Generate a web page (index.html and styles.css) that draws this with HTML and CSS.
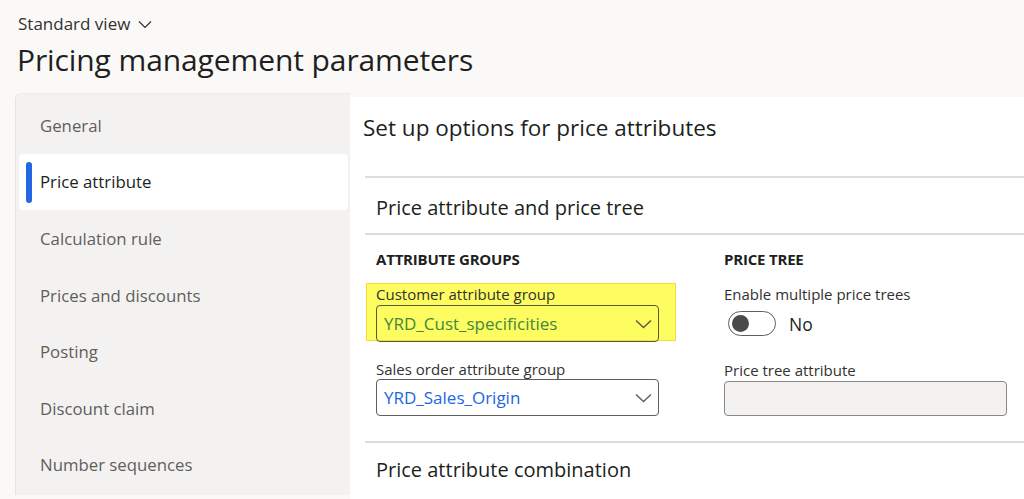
FILE: index.html
```html
<!DOCTYPE html>
<html lang="en">
<head>
  <meta charset="UTF-8">
  <title>Pricing management parameters</title>
  <link rel="stylesheet" href="styles.css">
</head>
<body>

  <header class="page-head">
    <div class="view-picker">Standard view
      <svg class="chev" width="14" height="9" viewBox="0 0 14 9"><path d="M1 1.5 L7 7.5 L13 1.5" fill="none" stroke="#323130" stroke-width="1.2"/></svg>
    </div>
    <h1>Pricing management parameters</h1>
  </header>

  <div class="workspace">
    <nav class="side-nav">
      <a class="nav-item">General</a>
      <a class="nav-item active">Price attribute</a>
      <a class="nav-item">Calculation rule</a>
      <a class="nav-item">Prices and discounts</a>
      <a class="nav-item">Posting</a>
      <a class="nav-item">Discount claim</a>
      <a class="nav-item">Number sequences</a>
    </nav>

    <main class="content">
      <h2 class="content-title">Set up options for price attributes</h2>

      <section class="fasttab">
        <h3 class="fasttab-title">Price attribute and price tree</h3>
        <div class="fasttab-body">
          <div class="group">
            <div class="group-title">ATTRIBUTE GROUPS</div>
            <div class="field highlight">
              <label>Customer attribute group</label>
              <div class="select">
                <span class="value">YRD_Cust_specificities</span>
                <svg width="17" height="10" viewBox="0 0 17 10"><path d="M1 1.5 L8.5 8.5 L16 1.5" fill="none" stroke="#5c5a3a" stroke-width="1.4"/></svg>
              </div>
            </div>
            <div class="field second">
              <label>Sales order attribute group</label>
              <div class="select">
                <span class="value">YRD_Sales_Origin</span>
                <svg width="17" height="10" viewBox="0 0 17 10"><path d="M1 1.5 L8.5 8.5 L16 1.5" fill="none" stroke="#605e5c" stroke-width="1.4"/></svg>
              </div>
            </div>
          </div>

          <div class="group">
            <div class="group-title">PRICE TREE</div>
            <div class="field first">
              <label>Enable multiple price trees</label>
              <div class="toggle-row">
                <span class="toggle"><span class="knob"></span></span>
                <span class="toggle-text">No</span>
              </div>
            </div>
            <div class="field tree-attr">
              <label>Price tree attribute</label>
              <div class="input disabled"></div>
            </div>
          </div>
        </div>
      </section>

      <section class="fasttab">
        <h3 class="fasttab-title">Price attribute combination</h3>
      </section>
    </main>
  </div>

</body>
</html>
```

FILE: styles.css
```css
body {
  margin: 0;
  background: #faf9f8;
  color: #201f1e;
  font-family: 'Open Sans', 'Noto Sans', sans-serif;
  height: 499px;
  overflow: hidden;
}

.page-head {
  padding: 12px 0 0 17px;
  height: 93px;
  box-sizing: border-box;
}

.view-picker {
  font-size: 17px;
  line-height: 24px;
  color: #323130;
  display: flex;
  align-items: center;
  gap: 8px;
  margin-left: 1px;
}

h1 {
  margin: 4px 0 0;
  font-size: 30px;
  font-weight: 400;
  line-height: 40px;
  letter-spacing: -0.1px;
}

.workspace {
  display: flex;
  margin-left: 15px;
}

.side-nav {
  flex: none;
  width: 335px;
  height: 402px;
  background: #f3f2f1;
  border-left: 1px solid #e6e4e2;
  border-top: 1px solid #eeecea;
  border-radius: 6px 0 0 0;
  box-sizing: border-box;
  padding: 3px 2px 0 3px;
  display: flex;
  flex-direction: column;
}

.nav-item {
  display: flex;
  align-items: center;
  height: 56.6px;
  flex: none;
  padding-left: 21px;
  font-size: 16.8px;
  color: #605e5c;
  border-radius: 4px;
  position: relative;
}

.nav-item.active {
  background: #fff;
  color: #201f1e;
}

.nav-item.active::before {
  content: '';
  position: absolute;
  left: 7px;
  top: 8px;
  bottom: 7px;
  width: 6px;
  border-radius: 3px;
  background: #2266e3;
}

.content {
  flex: 1;
  background: #fff;
  margin-top: 4px;
  height: 410px;
  padding: 16px 0 0 13px;
  box-sizing: border-box;
}

.content-title {
  margin: 0;
  font-size: 22.5px;
  font-weight: 400;
  line-height: 30px;
  height: 63px;
}

.fasttab {
  border-top: 2px solid #dedcdb;
  margin-left: 2px;
}

.fasttab-title {
  margin: 0;
  padding: 16px 0 0 11px;
  height: 57px;
  box-sizing: border-box;
  font-size: 20px;
  font-weight: 400;
  line-height: 28px;
  border-bottom: 2px solid #dedcdb;
}

.fasttab + .fasttab .fasttab-title {
  border-bottom: none;
  padding-top: 13px;
}

.fasttab-body {
  display: flex;
  padding: 14px 0 0 11px;
  height: 206px;
  box-sizing: border-box;
}

.group {
  width: 348px;
  flex: none;
}

.group-title {
  font-size: 15px;
  font-weight: 700;
  line-height: 20px;
  letter-spacing: -0.2px;
  color: #201f1e;
  margin-bottom: 14px;
}

.field label {
  display: block;
  font-size: 15px;
  color: #323130;
  line-height: 20px;
}

.field.highlight {
  background: #fdfd62;
  margin-left: -10px;
  padding-left: 9px;
  width: 310px;
  height: 58px;
  border: 1px solid #f7dc3c;
  box-sizing: border-box;
}

.field.second {
  margin-top: 18px;
}

.field.first {
  padding-top: 1px;
}

.field.tree-attr {
  margin-top: 24px;
}

.select {
  width: 283px;
  height: 37px;
  box-sizing: border-box;
  border: 1px solid #605e5c;
  border-radius: 4px;
  display: flex;
  align-items: center;
  justify-content: space-between;
  padding: 0 6px 0 7px;
  background: #fff;
}

.highlight .select {
  margin-top: 1px;
  background: transparent;
  border-color: #5b5a2e;
}

.select .value {
  font-size: 17px;
  color: #2266e3;
}

.highlight .select .value {
  color: #43873c;
}

.toggle-row {
  display: flex;
  align-items: center;
  gap: 13px;
  margin-top: 7px;
  padding-left: 4px;
}

.toggle {
  width: 48px;
  height: 25px;
  border: 1px solid #605e5c;
  border-radius: 13px;
  box-sizing: border-box;
  display: flex;
  align-items: center;
  padding-left: 3px;
}

.knob {
  width: 17px;
  height: 17px;
  border-radius: 50%;
  background: #4b4a48;
}

.toggle-text {
  font-size: 17.5px;
  color: #201f1e;
}

.input {
  width: 283px;
  height: 35px;
  margin-top: 1px;
  border: 1px solid #8a8886;
  border-radius: 4px;
  box-sizing: border-box;
}

.input.disabled {
  background: #f3f2f1;
}
```
